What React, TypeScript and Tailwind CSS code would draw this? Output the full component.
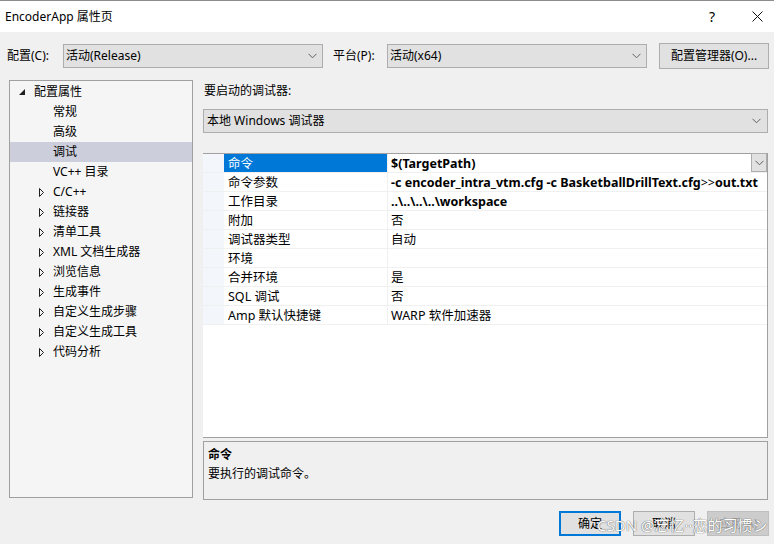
import React from "react";

const font = "font-['Noto_Sans','Noto_Sans_CJK_SC',sans-serif]";

function Chevron() {
    return (
        <svg width="9" height="6" viewBox="0 0 9 6" className="shrink-0">
            <polyline points="0.5,0.8 4.5,4.8 8.5,0.8" fill="none" stroke="#606060" strokeWidth="1" />
        </svg>
    );
}

function Select({text, className}: {text: string; className: string}) {
    return (
        <div
            className={`flex items-center justify-between h-[24px] bg-[#e1e1e1] border border-[#adadad] pl-[2px] pr-[5px] ${className}`}
        >
            <span>{text}</span>
            <Chevron />
        </div>
    );
}

const tree = [
    {label: "常规"},
    {label: "高级"},
    {label: "调试", selected: true},
    {label: "VC++ 目录"},
    {label: "C/C++", folder: true},
    {label: "链接器", folder: true},
    {label: "清单工具", folder: true},
    {label: "XML 文档生成器", folder: true},
    {label: "浏览信息", folder: true},
    {label: "生成事件", folder: true},
    {label: "自定义生成步骤", folder: true},
    {label: "自定义生成工具", folder: true},
    {label: "代码分析", folder: true}
];

const props = [
    {name: "命令", value: "$(TargetPath)", bold: true, selected: true},
    {name: "命令参数", value: "-c encoder_intra_vtm.cfg -c BasketballDrillText.cfg", tail: "out.txt", bold: true},
    {name: "工作目录", value: "..\\..\\..\\..\\workspace", bold: true},
    {name: "附加", value: "否"},
    {name: "调试器类型", value: "自动"},
    {name: "环境", value: ""},
    {name: "合并环境", value: "是"},
    {name: "SQL 调试", value: "否"},
    {name: "Amp 默认快捷键", value: "WARP 软件加速器"}
];

export default function App() {
    return (
        <div className={`relative w-[774px] h-[544px] overflow-hidden bg-[#f0f0f0] text-[12px] text-black ${font}`}>
            {/* title bar */}
            <div className="flex items-center h-[32px] bg-white border-t border-[#8c8c8c] pl-[5px]">
                <span className="flex-1">EncoderApp 属性页</span>
                <span className="text-[14px] w-[44px] text-center">?</span>
                <div className="w-[6px]" />
                <div className="w-[34px] flex justify-center">
                    <svg width="11" height="11" viewBox="0 0 11 11">
                        <path d="M0.5 0.5 L10.5 10.5 M10.5 0.5 L0.5 10.5" stroke="#111" strokeWidth="1" />
                    </svg>
                </div>
            </div>

            {/* configuration row */}
            <div className="flex items-center mt-[11px] h-[26px]">
                <span className="ml-[7px] w-[56px]">配置(C):</span>
                <Select text="活动(Release)" className="w-[260px]" />
                <span className="ml-[10px] w-[54px]">平台(P):</span>
                <Select text="活动(x64)" className="w-[260px]" />
                <button className="ml-[12px] w-[110px] h-[26px] bg-[#e1e1e1] border border-[#adadad]">
                    配置管理器(O)...
                </button>
            </div>

            {/* main */}
            <div className="flex mt-[11px] h-[420px]">
                <div className="ml-[9px] w-[184px] h-[418px] border border-[#a0a0a0] bg-[#f5f5f5] flex flex-col">
                    <div className="flex items-center h-[20px] mt-px">
                        <svg width="6" height="6" viewBox="0 0 6 6" className="ml-[9px] mr-[9px]">
                            <polygon points="6,0 6,6 0,6" fill="#1e1e1e" />
                        </svg>
                        <span>配置属性</span>
                    </div>
                    {tree.map(t => (
                        <div
                            key={t.label}
                            className={`flex items-center h-[20px] ${t.selected ? "bg-[#cccedb]" : ""}`}
                        >
                            <span className="w-[43px] flex justify-end pr-[9px]">
                                {t.folder && (
                                    <svg width="5" height="9" viewBox="0 0 5 9">
                                        <polygon points="0.5,0.5 4.5,4.5 0.5,8.5" fill="none" stroke="#1e1e1e" strokeWidth="1" />
                                    </svg>
                                )}
                            </span>
                            <span>{t.label}</span>
                        </div>
                    ))}
                </div>

                <div className="ml-[10px] w-[565px] flex flex-col">
                    <div className="h-[20px] mt-px flex items-center pl-px">要启动的调试器:</div>
                    <Select text="本地 Windows 调试器" className="mt-[8px] w-[565px] pl-[3px] pr-[6px]" />

                    <div className="mt-[20px] h-[286px] bg-white border-t border-r border-b border-[#a0a0a0] flex flex-col text-[12.5px]">
                        {props.map(p => (
                            <div key={p.name} className="flex h-[19px] border-b border-[#f0f0f0]">
                                <div className="w-[21px] bg-[#f3f6fb]" />
                                <div
                                    className={`w-[164px] pl-[4px] pt-[2px] flex items-center border-r border-[#f0f0f0] ${
                                        p.selected ? "bg-[#0078d7] text-white" : ""
                                    }`}
                                >
                                    {p.name}
                                </div>
                                <div className={`flex-1 flex items-center pl-[3px] whitespace-nowrap ${p.bold ? "font-bold" : ""}`}>
                                    <span className="flex-1 overflow-hidden pt-[2px]">
                                        {p.value}
                                        {p.tail && (
                                            <>
                                                <span className="font-normal">&gt;&gt;</span>
                                                {p.tail}
                                            </>
                                        )}
                                    </span>
                                    {p.selected && (
                                        <div className="w-[16px] h-[19px] bg-[#e1e1e1] border border-[#adadad] flex items-center justify-center">
                                            <Chevron />
                                        </div>
                                    )}
                                </div>
                            </div>
                        ))}
                    </div>

                    <div className="mt-[3px] h-[59px] border border-[#a0a0a0] px-[4px] pt-[3px] leading-[19px]">
                        <div className="font-bold">命令</div>
                        <div>要执行的调试命令。</div>
                    </div>
                </div>
            </div>

            {/* buttons */}
            <div className="flex justify-end gap-[12px] mt-[11px] pr-[5px]">
                <button className="w-[62px] h-[25px] bg-[#e1e1e1] border-2 border-[#0078d7]">确定</button>
                <button className="w-[62px] h-[25px] bg-[#e1e1e1] border border-[#adadad]">取消</button>
                <button className="w-[62px] h-[25px] bg-[#cccccc] border border-[#bfbfbf] text-[#a0a0a0]">应用(A)</button>
            </div>

            {/* watermark */}
            <div className="absolute left-[597px] top-[514px] text-[15px] text-white [text-shadow:0_0_1px_#666,0_0_1px_#666] whitespace-nowrap pointer-events-none">
                CSDN @忘忆··恋的习惯シ
            </div>
        </div>
    );
}
